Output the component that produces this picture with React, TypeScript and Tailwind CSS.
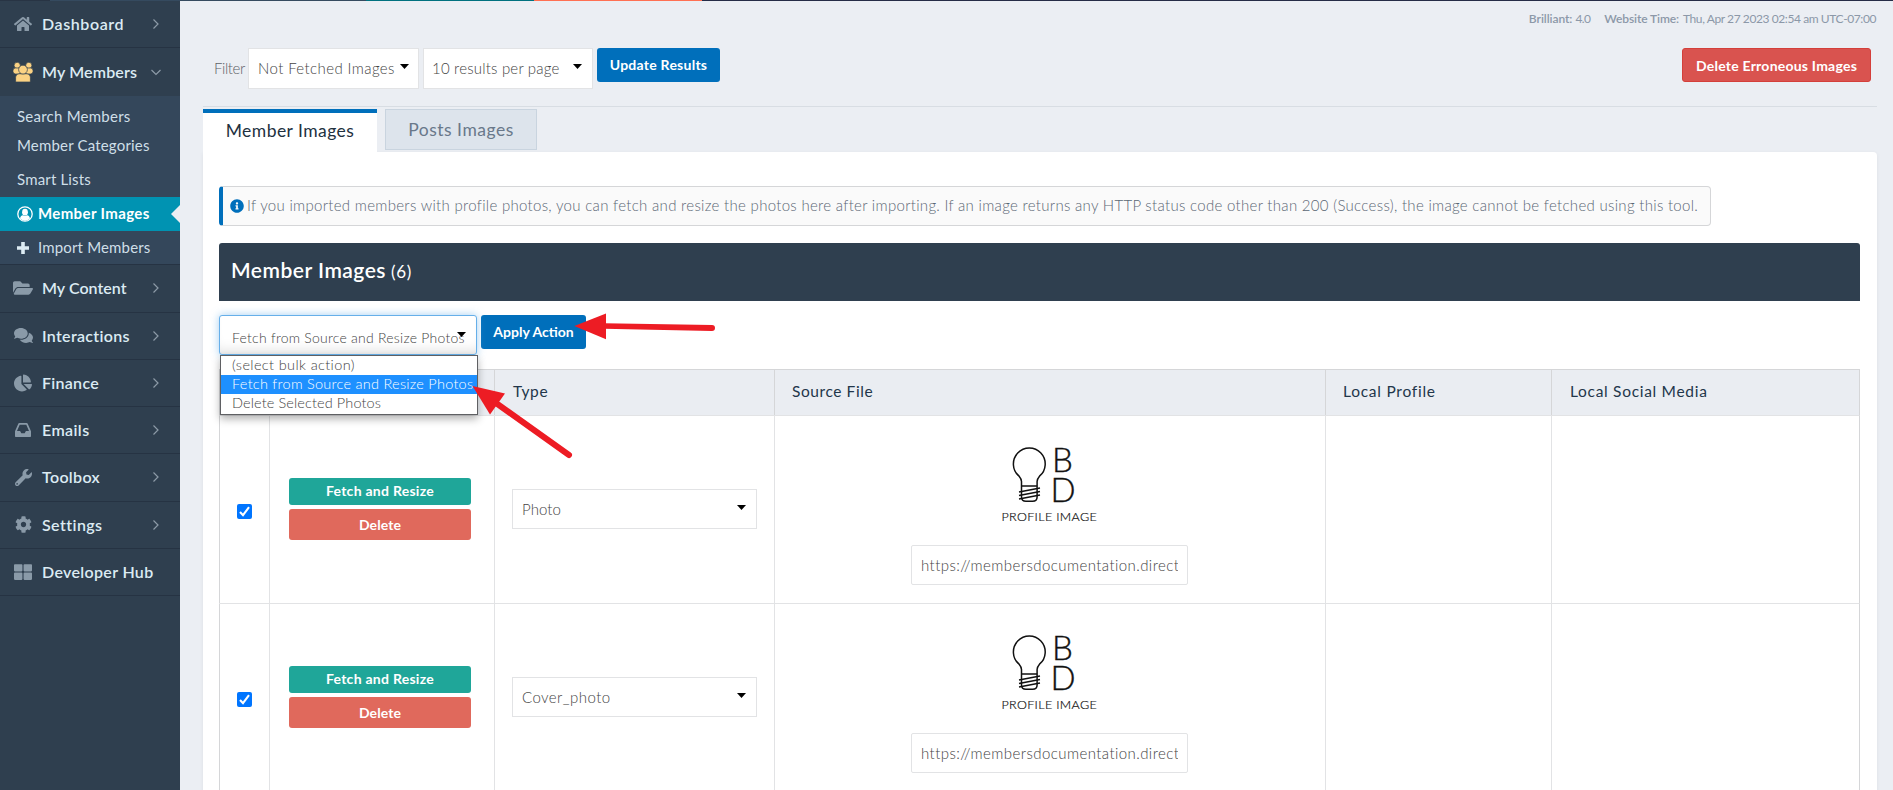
import React from 'react';
import type { ReactNode } from 'react';
import { FaHome, FaFolderOpen, FaComments, FaChartPie, FaWrench, FaCog, FaThLarge, FaInfoCircle } from 'react-icons/fa';

const Caret = ({ className = '' }: { className?: string }) => (
  <svg className={`w-[9px] h-[5px] shrink-0 ${className}`} viewBox="0 0 9 5">
    <path d="M0 0h9L4.5 5z" fill="#000" />
  </svg>
);

const MembersIcon = () => (
  <svg width="20" height="20" viewBox="0 0 20 20" fill="#fbd283" stroke="#2f3f4f" strokeWidth="0.7">
    <circle cx="4.2" cy="3.4" r="3.1" />
    <circle cx="15.8" cy="3.4" r="3.1" />
    <rect x="0" y="6" width="8" height="6" rx="2.4" />
    <rect x="12" y="6" width="8" height="6" rx="2.4" />
    <path d="M2.6 19.2v-3.6c0-2.2 1.6-3.8 3.8-3.8h7.2c2.2 0 3.8 1.6 3.8 3.8v3.6c0 .5-.3.8-.8.8H3.4c-.5 0-.8-.3-.8-.8z" />
    <circle cx="10" cy="7.6" r="4.4" />
  </svg>
);

const InboxIcon = () => (
  <svg width="16" height="14" viewBox="0 0 16 14" fill="currentColor" fillRule="evenodd">
    <path d="M3.400.600C3.600.200 3.900 0 4.300 0h7.400c.4 0 .7.2.9.6L16 8.200V13c0 .6-.4 1-1 1H1c-.6 0-1-.4-1-1V8.200zM4.700 1.700 2 8h3.100l1.200 2.200h3.400L10.900 8H14l-2.700-6.300z" />
  </svg>
);

const UserCircleIcon = () => (
  <svg width="16" height="16" viewBox="0 0 16 16">
    <circle cx="8" cy="8" r="7.2" fill="none" stroke="#fff" strokeWidth="1.3" />
    <ellipse cx="8" cy="6.2" rx="2.9" ry="3.4" fill="#fff" />
    <path d="M3 12.600c.3-2 1.300-3.200 2.900-3.400 1.200 1 3 1 4.200 0 1.600.2 2.600 1.400 2.900 3.400A7 7 0 0 1 8 14.700a7 7 0 0 1-5-2.100z" fill="#fff" />
  </svg>
);

const Chevron = ({ open }: { open?: boolean }) => (
  <svg width="10" height="10" viewBox="0 0 10 10" fill="none" stroke="#8d9ba8" strokeWidth="1.2" className="overflow-visible">
    <path d={open ? 'M.5 3 5 7.500 9.500 3' : 'M2.500 .5 7 5 2.500 9.500'} />
  </svg>
);

interface NavItemProps {
  icon: ReactNode;
  label: string;
  labelClass: string;
  rowClass?: string;
  open?: boolean;
  arrow?: boolean;
}

const NavItem = ({ icon, label, labelClass, rowClass = 'h-[47px]', open, arrow = true }: NavItemProps) => (
  <a className={`flex items-center border-b border-[#263343] pl-3 pr-[19px] pb-px ${rowClass}`}>
    <span className="w-[22px] flex justify-center text-[#8a9aa8] text-[17px]">{icon}</span>
    <span className={`ml-2 text-[16px] font-semibold text-[#dcebf3] whitespace-nowrap ${labelClass}`}>{label}</span>
    {arrow && <span className="ml-auto"><Chevron open={open} /></span>}
  </a>
);

const Sidebar = () => (
  <aside className="w-[180px] shrink-0 bg-[#2f3f4f]">
    <NavItem icon={<FaHome className="text-[18px]" />} label="Dashboard" labelClass="tracking-[0.6px]" />
    <NavItem icon={<MembersIcon />} label="My Members" labelClass="tracking-[0.15px]" rowClass="h-[48px] pb-[3px] border-b-0" open />
    <div className="h-[169px] border-b border-[#263343] bg-[#34475b] pt-[6px] text-[15px] text-[#cfdfe8]">
      <div className="h-[29px] pl-[17px] flex items-center tracking-[0.24px]">Search Members</div>
      <div className="h-[29px] pl-[17px] flex items-center tracking-[0.18px]">Member Categories</div>
      <div className="h-[37px] pl-[17px] pt-px flex items-center tracking-[0.17px]">Smart Lists</div>
      <div className="relative h-[34px] pl-[17px] pb-px flex items-center bg-[#0093b2] font-bold text-white tracking-[0.37px]">
        <UserCircleIcon />
        <span className="ml-[5px]">Member Images</span>
        <svg className="absolute right-0 top-[8px]" width="9" height="18" viewBox="0 0 9 18">
          <path d="M9 0v18L0 9z" fill="#ebeef3" />
        </svg>
      </div>
      <div className="h-[33px] pl-[17px] flex items-center tracking-[0.16px]">
        <svg width="12" height="12" viewBox="0 0 12 12" fill="#dcebf3">
          <path d="M4.200 0h3.600v4.200H12v3.600H7.800V12H4.200V7.800H0V4.200h4.200z" />
        </svg>
        <span className="ml-[9px]">Import Members</span>
      </div>
    </div>
    <NavItem icon={<FaFolderOpen className="text-[20px] shrink-0" />} label="My Content" labelClass="tracking-[0.04px]" rowClass="h-[48px]" />
    <NavItem icon={<FaComments className="text-[19px]" />} label="Interactions" labelClass="tracking-[0.31px]" />
    <NavItem icon={<FaChartPie className="text-[18px]" />} label="Finance" labelClass="tracking-[0.28px]" />
    <NavItem icon={<InboxIcon />} label="Emails" labelClass="tracking-[0.39px]" />
    <NavItem icon={<FaWrench />} label="Toolbox" labelClass="tracking-[0.33px]" rowClass="h-[48px]" />
    <NavItem icon={<FaCog />} label="Settings" labelClass="tracking-[0.42px]" />
    <NavItem icon={<FaThLarge className="text-[18px]" />} label="Developer Hub" labelClass="tracking-[0.33px]" arrow={false} />
  </aside>
);

// Placeholder picture served for members without a profile photo
const ProfileImage = () => (
  <svg width="120" height="90" viewBox="0 0 120 90" className="font-['Lato'] font-light">
    <g fill="none" stroke="#111" strokeWidth="1.5">
      <path d="M31.500 46v-4.500c0-2-.8-3.400-2.400-5.300A15.900 15.900 0 1 1 49.500 36.200c-1.600 1.900-2.400 3.300-2.400 5.300v15.500c0 3-2 4.300-4.500 4.300h-6.600c-2.500 0-4.500-1.300-4.500-4.300V46" />
      <path d="M31.500 46h15.600" />
      <path d="M29 52l21-4M29 55.500l21-4M29 59l21-4" />
    </g>
    <text x="62" y="32" fontSize="33" fill="#111" stroke="#111" strokeWidth="0.4">B</text>
    <text x="60.500" y="61.500" fontSize="33" fill="#111" stroke="#111" strokeWidth="0.4">D</text>
    <text x="11.500" y="80.500" fontSize="12.500" letterSpacing="0.3" fill="#111" stroke="#111" strokeWidth="0.2" textLength="95.500">PROFILE IMAGE</text>
  </svg>
);

interface ImageRow {
  type: string;
  typeClass: string;
  url: string;
}

const rows: ImageRow[] = [
  { type: 'Photo', typeClass: 'tracking-[0.09px]', url: 'https://membersdocumentation.directory' },
  { type: 'Cover_photo', typeClass: 'tracking-[0.44px]', url: 'https://membersdocumentation.directory' },
];

const TableRow = ({ row }: { row: ImageRow }) => (
  <div className="grid grid-cols-[50px_225px_280px_551px_226px_309px] h-[188px] border-t border-[#e2e3e5] border-r border-r-[#d5d6d8]">
    <div className="border-l border-[#d5d6d8] flex items-center pl-[17px] pt-[3px]">
      <span className="w-[15px] h-[15px] rounded-[2px] bg-[#0075ff]">
        <svg viewBox="0 0 15 15" fill="none" stroke="#fff" strokeWidth="2.100"><path d="M3 8l3 3.200 6-8" /></svg>
      </span>
    </div>
    <div className="border-l border-[#e2e3e5] flex flex-col justify-center gap-1 pl-[19px] pr-[23px] pb-px text-[14px] font-bold text-white text-center">
      <button className="h-[27px] rounded-[3px] bg-[#1fa699] pb-[2px] tracking-[0.27px]">Fetch and Resize</button>
      <button className="h-[31px] rounded-[3px] bg-[#e0695c] pb-px tracking-[0.08px]">Delete</button>
    </div>
    <div className="border-l border-[#e2e3e5] flex items-center pl-[17px] pb-px">
      <div className="w-[245px] h-10 border border-[#e2e3e5] bg-white flex items-center justify-between pl-[9px] pr-[10px] text-[15px] font-light text-[#444]">
        <span className={row.typeClass}>{row.type}</span>
        <Caret className="mb-1" />
      </div>
    </div>
    <div className="border-l border-[#e2e3e5] flex flex-col items-center pt-6 pr-px">
      <ProfileImage />
      <div className="mt-[15px] w-[277px] h-10 rounded-[2px] border border-[#e2e3e5] px-[9px] flex items-center shrink-0">
        <span className="w-full overflow-hidden whitespace-nowrap text-[15px] font-light text-[#444] tracking-[0.43px]">{row.url}</span>
      </div>
    </div>
    <div className="border-l border-[#e2e3e5]" />
    <div className="border-l border-[#e2e3e5]" />
  </div>
);

const BulkActions = () => (
  <div className="relative z-10 mt-[14px] flex gap-1 items-start">
    <div className="relative w-[258px] h-10 rounded-[3px] border border-[#66afe9] bg-white shadow-[0_0_8px_rgba(102,175,233,0.6),inset_0_-12px_14px_-10px_rgba(0,0,0,0.14)] pl-3 pt-[12px] text-[14px] leading-[20px] font-light text-[#444] tracking-[0.24px] whitespace-nowrap">
      Fetch from Source and Resize Photos
      <Caret className="absolute right-[10px] top-[16px]" />
    </div>
    <button className="h-[34px] w-[105px] rounded-[3px] bg-[#006fbb] text-white text-[14px] font-bold pb-[2px]">Apply Action</button>

    {/* open option list */}
    <div className="absolute left-px top-10 w-[258px] h-[60px] border border-[#5f6063] bg-white shadow-[0_4px_8px_rgba(0,0,0,0.3)] text-[14.5px] font-light text-[#444] whitespace-nowrap">
      <div className="h-[19px] leading-[17px] pl-[11px] tracking-[0.38px]">(select bulk action)</div>
      <div className="h-[19px] leading-[17px] pl-[11px] tracking-[0.26px] bg-[#1e90ff] text-white">Fetch from Source and Resize Photos</div>
      <div className="h-[19px] leading-[17px] pl-[11px] tracking-[0.12px]">Delete Selected Photos</div>
    </div>

    {/* pointer arrows */}
    <svg className="absolute left-[241px] top-[-5px] pointer-events-none" width="270" height="160" viewBox="0 0 270 160" fill="#ed1c24">
      <path d="M114.300 16 146 3.500V29.300z" />
      <path d="M144 13.200 252 15a3 3 0 0 1 0 6L144 18.800z" />
      <path d="M12.500 76 45 83.500 30 104.500z" />
      <path d="M36 93 109 145" stroke="#ed1c24" strokeWidth="6" strokeLinecap="round" />
    </svg>
  </div>
);

const FilterBar = () => (
  <div className="mt-3 h-[41px] flex items-start text-[15px] font-light text-[#5c6166]">
    <span className="h-[41px] w-[45px] pl-[11px] flex items-center tracking-[-0.4px]">Filter</span>
    <div className="w-[171px] h-[41px] border border-[#e2e3e5] bg-white flex items-center pl-[9px] pr-[9px] justify-between tracking-[0.4px] text-[#444] whitespace-nowrap">
      <span>Not Fetched Images</span>
      <Caret className="mb-1" />
    </div>
    <div className="ml-1 w-[170px] h-[41px] border border-[#e2e3e5] bg-white flex items-center pl-[8px] pr-[10px] justify-between tracking-[0.2px] text-[#444]">
      <span>10 results per page</span>
      <Caret className="mb-1" />
    </div>
    <button className="ml-1 w-[123px] h-[34px] rounded-[3px] bg-[#006fbb] pb-[2px] text-white text-[14px] font-bold tracking-[0.25px]">Update Results</button>
    <button className="ml-auto mr-[6px] w-[189px] h-[34px] rounded-[3px] border border-[#d43f3a] bg-[#d9534f] text-white text-[14px] font-bold tracking-[0.23px]">Delete Erroneous Images</button>
  </div>
);

export default function App() {
  return (
    <div className="w-[1893px] h-[790px] overflow-hidden bg-[#ebeef3] font-['Lato',sans-serif]">
      <div className="h-px flex">
        <div className="w-[50px] bg-[#283444]" />
        <div className="w-[316px] bg-[#354a5f]" />
        <div className="w-[168px] bg-[#00717f]" />
        <div className="w-[168px] bg-[#ff7052]" />
        <div className="flex-1 bg-[#262c46]" />
      </div>
      <div className="flex h-[789px]">
        <Sidebar />
        <main className="flex-1 min-w-0 pl-[23px] pr-[16px]">
          <div className="h-[35px] flex items-center justify-end pr-px text-[12px] text-[#8c98a8] whitespace-nowrap">
            <span className="font-semibold tracking-[-0.05px]">Brilliant:</span>
            <span className="ml-[3px] tracking-[-0.6px]">4.0</span>
            <span className="ml-[14px] font-semibold tracking-[-0.1px]">Website Time:</span>
            <span className="ml-1 tracking-[-0.410px]">Thu, Apr 27 2023 02:54 am UTC-07:00</span>
          </div>
          <FilterBar />
          <div className="mt-[17px] border-t border-[#d8dde3]" />

          {/* tabs */}
          <div className="mt-[2px] h-[43px] flex gap-2 text-[17.5px]">
            <div className="w-[174px] border-t-4 border-[#006fbb] bg-white flex items-center justify-center pb-[3px] text-[#22313f] tracking-[0.45px]">Member Images</div>
            <div className="w-[152px] h-[41px] border border-[#c9d4df] bg-[#dde4ec] flex items-center justify-center pt-[2px] text-[#69788a] tracking-[0.5px]">Posts Images</div>
          </div>

          <section className="h-[650px] rounded-tr-[4px] bg-white shadow-[0_1px_4px_rgba(0,0,0,0.06)] pl-4 pr-[17px] pt-[34px]">
            <div className="w-[1492px] h-10 rounded-[4px] border border-[#d5d6d8] border-l-4 border-l-[#006fbb] bg-[#fafafa] flex items-center pl-[7px] text-[15px] font-light text-[#5a6775] whitespace-nowrap">
              <FaInfoCircle className="text-[14px] text-[#006fbb]" />
              <span className="ml-[3px] pb-px tracking-[0.305px]">
                If you imported members with profile photos, you can fetch and resize the photos here after importing. If an image returns any HTTP status code other than 200 (Success), the image cannot be fetched using this tool.
              </span>
            </div>

            <h2 className="mt-[17px] h-[58px] rounded-t-[3px] bg-[#2f3f4f] flex items-center pl-3 pb-[4px] text-white">
              <span className="text-[21px] font-semibold tracking-[0.5px]">Member Images</span>
              <span className="ml-[5px] pt-[3px] text-[17px] tracking-[0.69px]">(6)</span>
            </h2>

            <BulkActions />

            <div className="mt-[14px] grid grid-cols-[50px_225px_280px_551px_226px_309px] h-[46px] items-stretch border-t border-r border-[#d5d6d8] bg-[#eaedf2] text-[15.5px] text-[#22364a] [&>div]:border-l [&>div]:border-[#d5d6d8] [&>div]:flex [&>div]:items-center [&>div]:pb-px">
              <div />
              <div />
              <div className="pl-[18px] tracking-[0.65px]">Type</div>
              <div className="pl-[17px] tracking-[0.58px]">Source File</div>
              <div className="pl-[17px] tracking-[0.75px]">Local Profile</div>
              <div className="pl-[18px] tracking-[0.7px]">Local Social Media</div>
            </div>
            {rows.map((row) => <TableRow key={row.type} row={row} />)}
          </section>
        </main>
      </div>
    </div>
  );
}
